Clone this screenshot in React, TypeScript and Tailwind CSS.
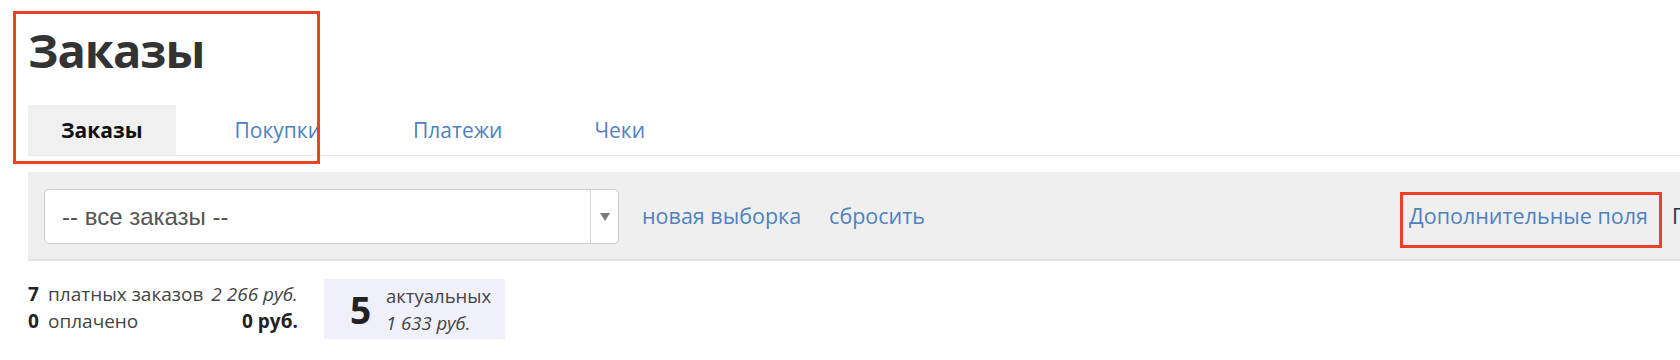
import React from "react";

const font = { fontFamily: '"Open Sans", "Noto Sans", sans-serif' };
const selectFont = { fontFamily: '"Liberation Sans", Arial, sans-serif' };

export default function App() {
  return (
    <div className="relative w-[1680px] h-[360px] overflow-hidden bg-white text-[#333]" style={font}>
      <div className="pl-[28px]">
        <h1 className="mt-[20px] text-[47px] leading-[60px] font-bold text-[#333] tracking-[-1px]">Заказы</h1>
        <div className="mt-[25px] flex h-[51px] border-b border-[#e8e8e8] gap-[26px]">
          <div className="h-[50px] px-[33px] bg-[#f0f0f0] text-[21px] leading-[50px] font-bold text-[#111]">Заказы</div>
          <div className="h-[50px] px-[33px] text-[21px] leading-[50px] text-[#4f81c0]">Покупки</div>
          <div className="h-[50px] px-[33px] text-[21px] leading-[50px] text-[#4f81c0]">Платежи</div>
          <div className="h-[50px] px-[33px] text-[21px] leading-[50px] text-[#4f81c0]">Чеки</div>
        </div>
        <div className="mt-[16px] w-[1700px] h-[89px] bg-[#efefef] border-b-2 border-[#e2e2e2] flex items-center pl-[16px] pt-[2px]">
          <div className="w-[1365px] flex items-center shrink-0">
            <div className="w-[575px] h-[55px] bg-white border border-[#cfcfcf] rounded-[5px] flex">
              <div className="flex-1 flex items-center pl-[17px] text-[24px] text-[#555]" style={selectFont}>-- все заказы --</div>
              <div className="w-[28px] border-l border-[#d6d6d6] flex items-center justify-center">
                <svg width="10" height="8" viewBox="0 0 10 8"><path d="M0 0 H10 L5 8 Z" fill="#7a7a7a" /></svg>
              </div>
            </div>
            <span className="ml-[23px] text-[21.5px] text-[#4f81c0]">новая выборка</span>
            <span className="ml-[28px] text-[21.5px] text-[#4f81c0]">сбросить</span>
          </div>
          <span className="text-[21.5px] text-[#4f81c0] whitespace-nowrap">Дополнительные поля</span>
          <span className="ml-[24px] text-[21.5px] text-[#333] whitespace-nowrap">Печать</span>
        </div>
        <div className="mt-[18px] flex items-start">
          <div className="pt-[2px] text-[19px] leading-[27px] text-[#444]">
            <div className="flex">
              <span className="font-bold text-[#222] w-[20px]">7</span>
              <span>платных заказов</span>
              <span className="ml-auto pl-[8px] italic">2 266 руб.</span>
            </div>
            <div className="flex">
              <span className="font-bold text-[#222] w-[20px]">0</span>
              <span>оплачено</span>
              <span className="ml-auto font-bold text-[#222]">0 руб.</span>
            </div>
          </div>
          <div className="ml-[26px] h-[60px] bg-[#f0f0fb] flex items-center pl-[26px] pr-[14px]">
            <span className="text-[37px] font-bold text-[#222] leading-none">5</span>
            <div className="ml-[15px] text-[18.5px] leading-[27px] text-[#444]">
              <div>актуальных</div>
              <div className="italic">1 633 руб.</div>
            </div>
          </div>
        </div>
      </div>
      <div className="absolute left-[13px] top-[11px] w-[307px] h-[153px] border-[3px] border-[#ee4027]" />
      <div className="absolute left-[1400px] top-[192px] w-[262px] h-[56px] border-[3px] border-[#ee4027]" />
    </div>
  );
}
